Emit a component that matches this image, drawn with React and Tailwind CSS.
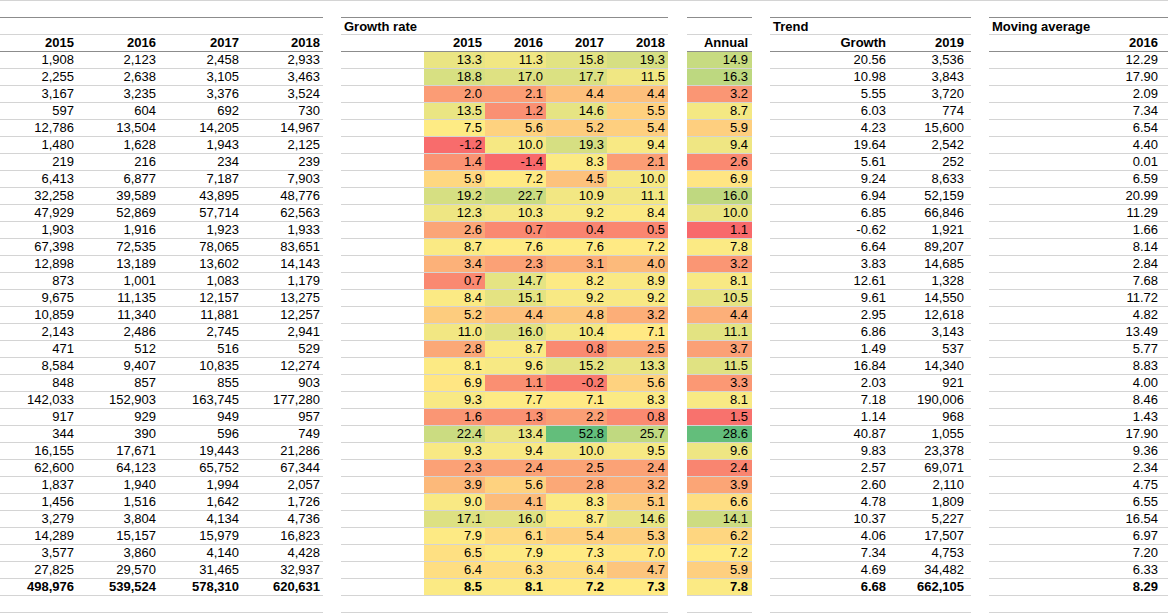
import React from "react";

const base = [
  ["1,908", "2,123", "2,458", "2,933"],
  ["2,255", "2,638", "3,105", "3,463"],
  ["3,167", "3,235", "3,376", "3,524"],
  ["597", "604", "692", "730"],
  ["12,786", "13,504", "14,205", "14,967"],
  ["1,480", "1,628", "1,943", "2,125"],
  ["219", "216", "234", "239"],
  ["6,413", "6,877", "7,187", "7,903"],
  ["32,258", "39,589", "43,895", "48,776"],
  ["47,929", "52,869", "57,714", "62,563"],
  ["1,903", "1,916", "1,923", "1,933"],
  ["67,398", "72,535", "78,065", "83,651"],
  ["12,898", "13,189", "13,602", "14,143"],
  ["873", "1,001", "1,083", "1,179"],
  ["9,675", "11,135", "12,157", "13,275"],
  ["10,859", "11,340", "11,881", "12,257"],
  ["2,143", "2,486", "2,745", "2,941"],
  ["471", "512", "516", "529"],
  ["8,584", "9,407", "10,835", "12,274"],
  ["848", "857", "855", "903"],
  ["142,033", "152,903", "163,745", "177,280"],
  ["917", "929", "949", "957"],
  ["344", "390", "596", "749"],
  ["16,155", "17,671", "19,443", "21,286"],
  ["62,600", "64,123", "65,752", "67,344"],
  ["1,837", "1,940", "1,994", "2,057"],
  ["1,456", "1,516", "1,642", "1,726"],
  ["3,279", "3,804", "4,134", "4,736"],
  ["14,289", "15,157", "15,979", "16,823"],
  ["3,577", "3,860", "4,140", "4,428"],
  ["27,825", "29,570", "31,465", "32,937"],
];
const baseTotal = ["498,976", "539,524", "578,310", "620,631"];

const growth = [
  [13.3, 11.3, 15.8, 19.3, 14.9],
  [18.8, 17.0, 17.7, 11.5, 16.3],
  [2.0, 2.1, 4.4, 4.4, 3.2],
  [13.5, 1.2, 14.6, 5.5, 8.7],
  [7.5, 5.6, 5.2, 5.4, 5.9],
  [-1.2, 10.0, 19.3, 9.4, 9.4],
  [1.4, -1.4, 8.3, 2.1, 2.6],
  [5.9, 7.2, 4.5, 10.0, 6.9],
  [19.2, 22.7, 10.9, 11.1, 16.0],
  [12.3, 10.3, 9.2, 8.4, 10.0],
  [2.6, 0.7, 0.4, 0.5, 1.1],
  [8.7, 7.6, 7.6, 7.2, 7.8],
  [3.4, 2.3, 3.1, 4.0, 3.2],
  [0.7, 14.7, 8.2, 8.9, 8.1],
  [8.4, 15.1, 9.2, 9.2, 10.5],
  [5.2, 4.4, 4.8, 3.2, 4.4],
  [11.0, 16.0, 10.4, 7.1, 11.1],
  [2.8, 8.7, 0.8, 2.5, 3.7],
  [8.1, 9.6, 15.2, 13.3, 11.5],
  [6.9, 1.1, -0.2, 5.6, 3.3],
  [9.3, 7.7, 7.1, 8.3, 8.1],
  [1.6, 1.3, 2.2, 0.8, 1.5],
  [22.4, 13.4, 52.8, 25.7, 28.6],
  [9.3, 9.4, 10.0, 9.5, 9.6],
  [2.3, 2.4, 2.5, 2.4, 2.4],
  [3.9, 5.6, 2.8, 3.2, 3.9],
  [9.0, 4.1, 8.3, 5.1, 6.6],
  [17.1, 16.0, 8.7, 14.6, 14.1],
  [7.9, 6.1, 5.4, 5.3, 6.2],
  [6.5, 7.9, 7.3, 7.0, 7.2],
  [6.4, 6.3, 6.4, 4.7, 5.9],
];
const growthTotal = [8.5, 8.1, 7.2, 7.3, 7.8];

const trend = [
  ["20.56", "3,536"], ["10.98", "3,843"], ["5.55", "3,720"], ["6.03", "774"],
  ["4.23", "15,600"], ["19.64", "2,542"], ["5.61", "252"], ["9.24", "8,633"],
  ["6.94", "52,159"], ["6.85", "66,846"], ["-0.62", "1,921"], ["6.64", "89,207"],
  ["3.83", "14,685"], ["12.61", "1,328"], ["9.61", "14,550"], ["2.95", "12,618"],
  ["6.86", "3,143"], ["1.49", "537"], ["16.84", "14,340"], ["2.03", "921"],
  ["7.18", "190,006"], ["1.14", "968"], ["40.87", "1,055"], ["9.83", "23,378"],
  ["2.57", "69,071"], ["2.60", "2,110"], ["4.78", "1,809"], ["10.37", "5,227"],
  ["4.06", "17,507"], ["7.34", "4,753"], ["4.69", "34,482"],
];
const trendTotal = ["6.68", "662,105"];

const mavg = [
  "12.29", "17.90", "2.09", "7.34", "6.54", "4.40", "0.01", "6.59", "20.99", "11.29",
  "1.66", "8.14", "2.84", "7.68", "11.72", "4.82", "13.49", "5.77", "8.83", "4.00",
  "8.46", "1.43", "17.90", "9.36", "2.34", "4.75", "6.55", "16.54", "6.97", "7.20", "6.33",
];
const mavgTotal = "8.29";

const RED = [248, 105, 107];
const YEL = [255, 235, 132];
const GRN = [99, 190, 123];

function makeScale(vals) {
  const s = [...vals].sort((a, b) => a - b);
  const min = s[0];
  const max = s[s.length - 1];
  const pos = (s.length - 1) * 0.5;
  const lo = Math.floor(pos);
  const mid = s[lo] + (s[Math.min(lo + 1, s.length - 1)] - s[lo]) * (pos - lo);
  const lerp = (a, b, t) => a.map((x, i) => Math.round(x + (b[i] - x) * t));
  return (v) => {
    let c;
    if (v <= mid) c = lerp(RED, YEL, Math.max(0, Math.min(1, (v - min) / (mid - min))));
    else c = lerp(YEL, GRN, Math.max(0, Math.min(1, (v - mid) / (max - mid))));
    return `rgb(${c[0]},${c[1]},${c[2]})`;
  };
}

const gridScale = makeScale(growth.flatMap((r) => r.slice(0, 4)));
const annualScale = makeScale(growth.map((r) => r[4]));

const LIGHT = "border-b border-[#d4d4d4]";
const DARK = "border-b border-[#8c8c8c]";

function Cell({ w, children, bold, bg, pr, dark, className = "" }) {
  return (
    <div
      className={`h-[17px] shrink-0 text-right leading-[16px] whitespace-nowrap ${dark ? DARK : LIGHT} ${
        bold ? "font-bold" : ""
      } ${pr || "pr-[3px]"} ${w} ${className}`}
      style={bg ? { backgroundColor: bg } : undefined}
    >
      {children}
    </div>
  );
}

function Section({ width, title, header, rows, total }) {
  return (
    <div className={`flex flex-col shrink-0 ${width}`}>
      <div className={`h-[17px] ${DARK}`} />
      <div className={`h-[17px] ${LIGHT} font-bold text-[13px] leading-[16px] pl-[3px] pt-[1px]`}>{title}</div>
      <div className="flex">{header}</div>
      {rows}
      <div className="flex">{total}</div>
      <div className={`h-[17px] ${LIGHT}`} />
    </div>
  );
}

const W1 = ["w-[77px]", "w-[82px]", "w-[83px]", "w-[81px]"];
const YEARS = ["2015", "2016", "2017", "2018"];

export default function App() {
  return (
    <div className="w-[1168px] h-[613px] overflow-hidden bg-white text-black text-[13px] font-['Liberation_Sans',Arial,sans-serif]">
      <div className="h-px bg-[#d4d4d4]" />
      <div className="flex">
        {/* Section 1: base values */}
        <Section
          width="w-[323px]"
          title=""
          header={YEARS.map((y, i) => (
            <Cell key={y} w={W1[i]} bold dark>
              {y}
            </Cell>
          ))}
          rows={base.map((r, ri) => (
            <div className="flex" key={ri}>
              {r.map((v, i) => (
                <Cell key={i} w={W1[i]}>
                  {v}
                </Cell>
              ))}
            </div>
          ))}
          total={baseTotal.map((v, i) => (
            <Cell key={i} w={W1[i]} bold>
              {v}
            </Cell>
          ))}
        />

        {/* Section 2: growth rate */}
        <div className="ml-[18px]">
          <Section
            width="w-[327px]"
            title="Growth rate"
            header={
              <>
                <Cell w="w-[83px]" dark />
                {YEARS.map((y) => (
                  <Cell key={y} w="w-[61px]" bold dark>
                    {y}
                  </Cell>
                ))}
              </>
            }
            rows={growth.map((r, ri) => (
              <div className="flex" key={ri}>
                <Cell w="w-[83px]" />
                {r.slice(0, 4).map((v, i) => (
                  <Cell key={i} w="w-[61px]" bg={gridScale(v)}>
                    {v.toFixed(1)}
                  </Cell>
                ))}
              </div>
            ))}
            total={
              <>
                <Cell w="w-[83px]" />
                {growthTotal.slice(0, 4).map((v, i) => (
                  <Cell key={i} w="w-[61px]" bold bg={gridScale(v)}>
                    {v.toFixed(1)}
                  </Cell>
                ))}
              </>
            }
          />
        </div>

        {/* Annual */}
        <div className="ml-[19px]">
          <Section
            width="w-[65px]"
            title=""
            header={
              <Cell w="w-[65px]" bold dark pr="pr-[4px]">
                Annual
              </Cell>
            }
            rows={growth.map((r, ri) => (
              <div className="flex" key={ri}>
                <Cell w="w-[65px]" bg={annualScale(r[4])} pr="pr-[4px]">
                  {r[4].toFixed(1)}
                </Cell>
              </div>
            ))}
            total={
              <Cell w="w-[65px]" bold bg={annualScale(growthTotal[4])} pr="pr-[4px]">
                {growthTotal[4].toFixed(1)}
              </Cell>
            }
          />
        </div>

        {/* Trend */}
        <div className="ml-[18px]">
          <Section
            width="w-[201px]"
            title="Trend"
            header={
              <>
                <Cell w="w-[39px]" dark />
                <Cell w="w-[80px]" bold dark>
                  Growth
                </Cell>
                <Cell w="w-[82px]" bold dark pr="pr-[7px]">
                  2019
                </Cell>
              </>
            }
            rows={trend.map((r, ri) => (
              <div className="flex" key={ri}>
                <Cell w="w-[39px]" />
                <Cell w="w-[80px]">{r[0]}</Cell>
                <Cell w="w-[82px]" pr="pr-[7px]">
                  {r[1]}
                </Cell>
              </div>
            ))}
            total={
              <>
                <Cell w="w-[39px]" />
                <Cell w="w-[80px]" bold>
                  {trendTotal[0]}
                </Cell>
                <Cell w="w-[82px]" bold pr="pr-[7px]">
                  {trendTotal[1]}
                </Cell>
              </>
            }
          />
        </div>

        {/* Moving average */}
        <div className="ml-[18px]">
          <Section
            width="w-[179px]"
            title="Moving average"
            header={
              <Cell w="w-[179px]" bold dark pr="pr-[10px]">
                2016
              </Cell>
            }
            rows={mavg.map((v, ri) => (
              <div className="flex" key={ri}>
                <Cell w="w-[179px]" pr="pr-[10px]">
                  {v}
                </Cell>
              </div>
            ))}
            total={
              <Cell w="w-[179px]" bold pr="pr-[10px]">
                {mavgTotal}
              </Cell>
            }
          />
        </div>
      </div>
    </div>
  );
}
